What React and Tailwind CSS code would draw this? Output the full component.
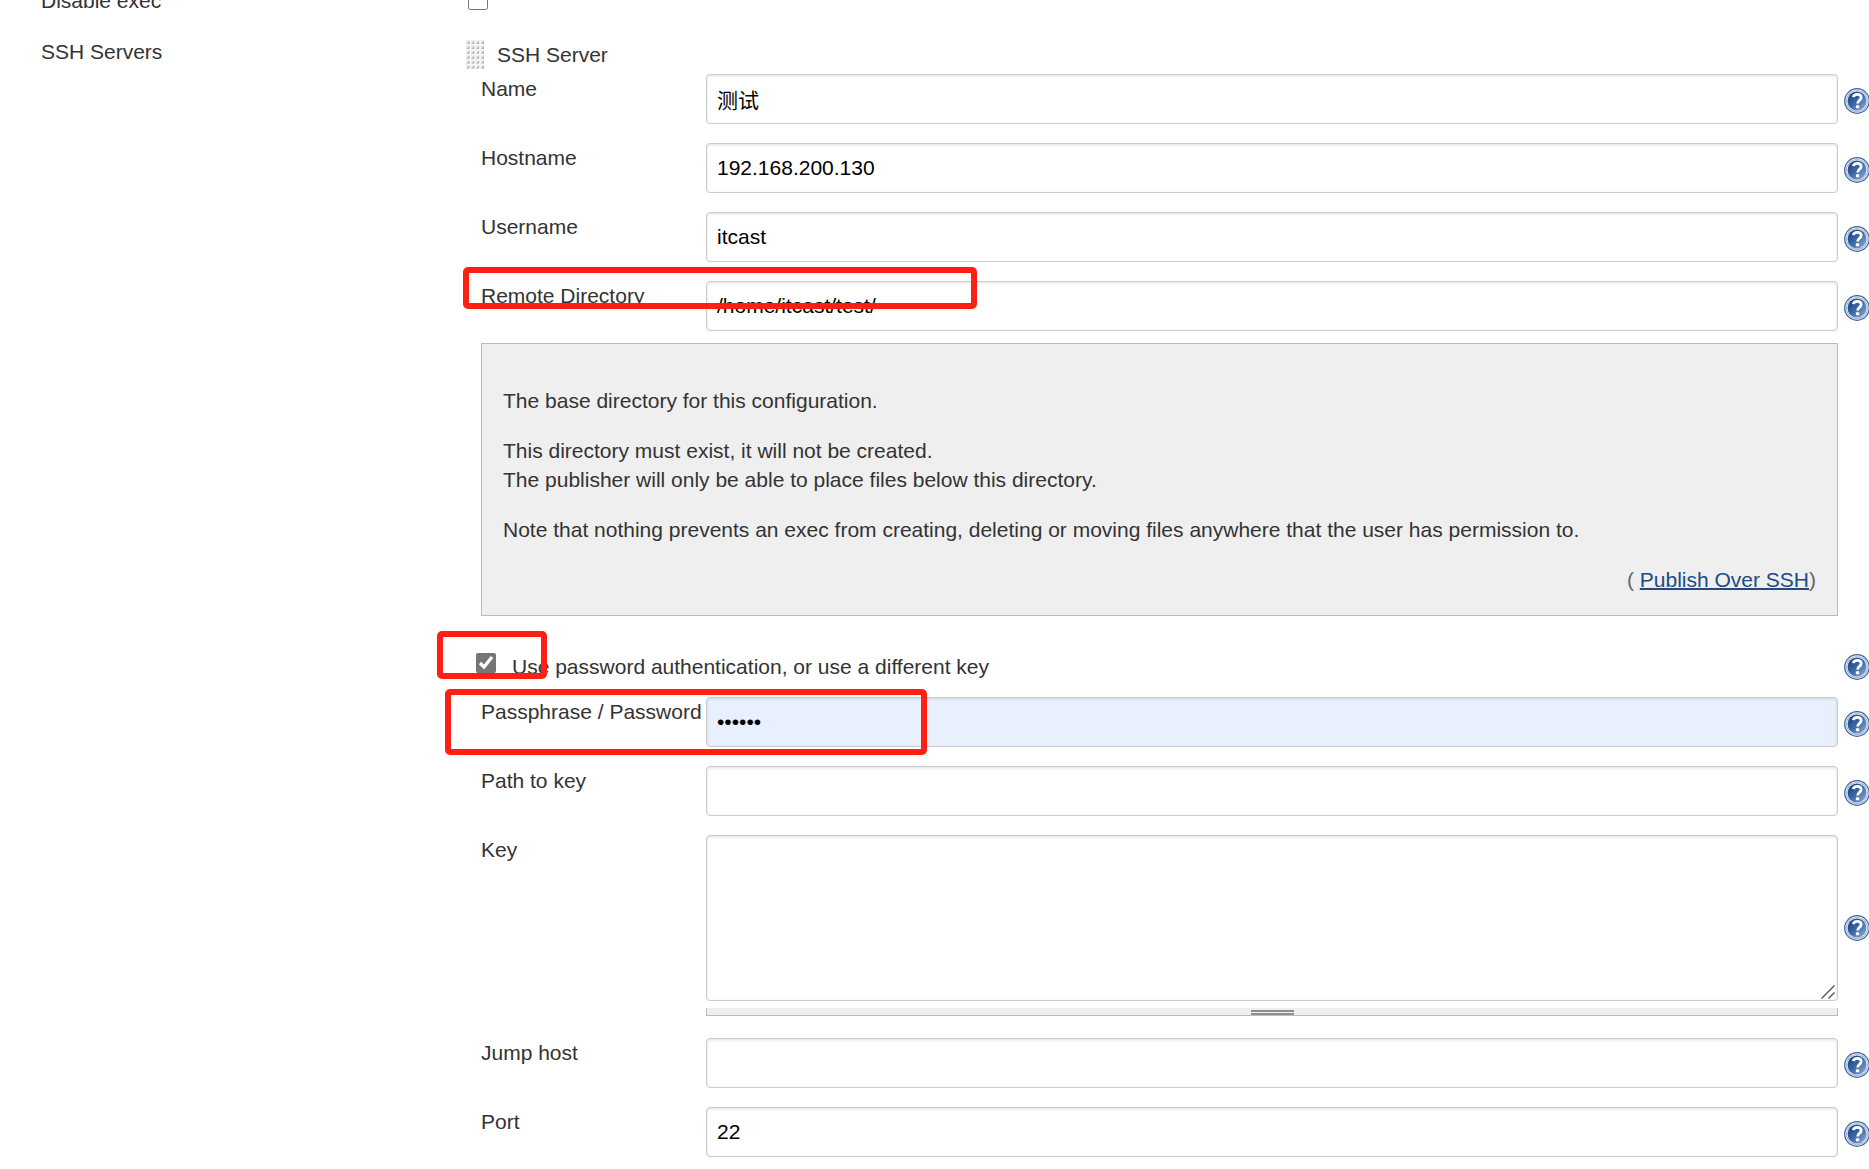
/**
 * App.jsx — Publish over SSH server settings
 */

const DOT_COLS = [0, 1, 2, 3];
const DOT_ROWS = [0, 1, 2, 3, 4, 5];

const INPUT_CLASS =
  'block w-full h-[50px] px-2.5 rounded-[4px] border border-[#ccc] text-black shadow-[inset_0_1px_3px_rgba(0,0,0,0.12)] outline-none';

function HelpIcon() {
  return (
    <svg width="26" height="26" viewBox="0 0 26 26" className="block shrink-0" aria-hidden="true">
      <defs>
        <linearGradient id="help-fill" x1="0" y1="0" x2="1" y2="1">
          <stop offset="0.15" stopColor="#1d4787" />
          <stop offset="0.5" stopColor="#3f69a6" />
          <stop offset="1" stopColor="#92b1da" />
        </linearGradient>
      </defs>
      <circle cx="13" cy="13" r="12.9" fill="#3c639d" />
      <circle cx="13" cy="13" r="11.7" fill="#e6ecf5" />
      <circle cx="13" cy="13" r="10.8" fill="#8fa9cf" />
      <circle cx="13" cy="13" r="10.2" fill="#e6ecf5" />
      <circle cx="13" cy="13" r="9.4" fill="url(#help-fill)" />
      <path
        d="M9 9C10 6.9 11.6 6.3 13.3 6.3c2.3 0 3.9 1.2 3.9 3.1 0 2.9-3.6 2.9-3.6 6.2"
        fill="none"
        stroke="#fff"
        strokeWidth="2.8"
      />
      <rect x="11.9" y="17.2" width="3.3" height="3" rx="0.6" fill="#fff" />
    </svg>
  );
}

function HelpButton({ label }) {
  return (
    <button type="button" aria-label={`Help for ${label}`} className="flex w-[25px] shrink-0 cursor-pointer">
      <HelpIcon />
    </button>
  );
}

function DragHandle() {
  return (
    <svg width="19" height="30" viewBox="0 0 19 30" className="block shrink-0" aria-hidden="true">
      {DOT_ROWS.map((row) =>
        DOT_COLS.map((col) => (
          <g key={`${row}-${col}`} transform={`translate(${col * 4.8} ${row * 4.9})`}>
            <rect width="3.6" height="4" fill="#ececec" />
            <path d="M3.6 0.8V4H0.4z" fill="#b4b4b0" />
          </g>
        ))
      )}
    </svg>
  );
}

// Red marker frame drawn over the form
function Marker({ className }) {
  return <div className={`pointer-events-none absolute rounded-[5px] border-6 border-[#ff2012] ${className}`} />;
}

function Field({ id, label, children }) {
  return (
    <div className="relative flex">
      <label htmlFor={id} className="w-[225px] shrink-0 whitespace-nowrap">{label}</label>
      <div className="relative min-w-0 flex-1">{children}</div>
      <div className="flex items-center pt-1 pl-1.5">
        <HelpButton label={label} />
      </div>
    </div>
  );
}

function TextField({ id, label, value = '' }) {
  return (
    <Field id={id} label={label}>
      <input id={id} type="text" defaultValue={value} className={INPUT_CLASS} />
    </Field>
  );
}

function DirectoryHelp() {
  return (
    <div className="mt-3 mr-[31px] border border-[#bbb] bg-[#efefef] p-[21px] leading-[29px]">
      <p className="mt-[21px]">The base directory for this configuration.</p>
      <p className="mt-[21px]">
        This directory must exist, it will not be created.
        <br />
        The publisher will only be able to place files below this directory.
      </p>
      <p className="mt-[21px]">
        Note that nothing prevents an exec from creating, deleting or moving files anywhere that the user has permission to.
      </p>
      <p className="mt-[21px] text-right text-[#666]">
        ( <a href="#publish-over-ssh" className="text-[#204a87] underline decoration-2">Publish Over SSH</a>)
      </p>
    </div>
  );
}

export default function App() {
  return (
    <div className="min-h-screen overflow-hidden bg-white pl-[41px] font-['Liberation_Sans','Noto_Sans_CJK_SC',sans-serif] text-[21px] leading-[30px] text-[#333]">
      <form className="-mt-3.5">
        <div className="flex">
          <label htmlFor="disable-exec" className="w-[425px] shrink-0">Disable exec</label>
          <input id="disable-exec" type="checkbox" className="mt-1 ml-0.5 size-5" />
        </div>

        <div className="mt-[21px] flex">
          <div className="w-[425px] shrink-0">SSH Servers</div>

          <div className="min-w-0 flex-1 pt-[3px]">
            <div className="flex gap-3">
              <DragHandle />
              <span>SSH Server</span>
            </div>

            <div className="pl-[15px]">
              <div className="mt-1 flex flex-col gap-[19px]">
                <TextField id="name" label="Name" value="测试" />
                <TextField id="hostname" label="Hostname" value="192.168.200.130" />
                <TextField id="username" label="Username" value="itcast" />
                <div className="relative">
                  <TextField id="remote-directory" label="Remote Directory" value="/home/itcast/test/" />
                  <Marker className="-top-3.5 -left-[18px] h-[42px] w-[514px]" />
                </div>
              </div>

              <DirectoryHelp />

              <div className="relative mt-9 flex items-center justify-between">
                <div className="-ml-[5px] flex gap-4">
                  <input id="use-password" type="checkbox" defaultChecked className="mt-px size-5 accent-[#767676]" />
                  <label htmlFor="use-password">Use password authentication, or use a different key</label>
                </div>
                <HelpButton label="Use password authentication" />
                <Marker className="-top-[21px] -left-11 h-12 w-[110px]" />
              </div>

              <div className="mt-[15px] flex flex-col gap-[19px]">
                <div className="relative">
                  <Field id="passphrase" label="Passphrase / Password">
                    <input
                      id="passphrase"
                      type="password"
                      defaultValue="itcast"
                      className={`${INPUT_CLASS} bg-[#e8f0fe]`}
                    />
                  </Field>
                  <Marker className="-top-2 -left-9 h-[66px] w-[482px]" />
                </div>
                <TextField id="path-to-key" label="Path to key" />
                <Field id="key" label="Key">
                  <textarea
                    id="key"
                    className="block h-[166px] w-full resize-none rounded-[4px] border border-[#ccc] p-2.5 text-black shadow-[inset_0_1px_3px_rgba(0,0,0,0.12)] outline-none"
                  />
                  <svg width="14" height="14" viewBox="0 0 14 14" className="absolute top-[150px] right-[3px]" aria-hidden="true">
                    <path d="M0.5 13.5L13.5 0.5M7.5 13.5L13.5 7.5" stroke="#555" strokeWidth="1.4" />
                  </svg>
                  <div className="mt-[7px] flex h-2 items-end justify-center border border-t-0 border-[#bbb] bg-[#eee]">
                    <div className="h-[5px] w-[43px] border-y-2 border-[#8f8f88]" />
                  </div>
                </Field>
              </div>

              <div className="mt-[22px] flex flex-col gap-[19px]">
                <TextField id="jump-host" label="Jump host" />
                <TextField id="port" label="Port" value="22" />
              </div>
            </div>
          </div>
        </div>
      </form>
    </div>
  );
}
